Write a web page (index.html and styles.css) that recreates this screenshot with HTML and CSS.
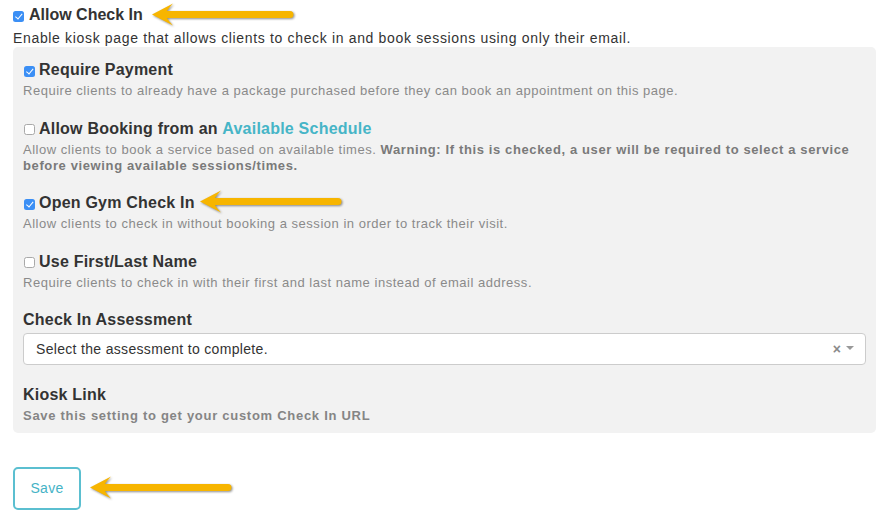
FILE: index.html
```html
<!DOCTYPE html>
<html>
<head>
<meta charset="utf-8">
<link rel="stylesheet" href="styles.css">
</head>
<body>
<div class="page">
  <div class="top-title"><span class="cb checked"></span>Allow Check In</div>
  <div class="top-desc">Enable kiosk page that allows clients to check in and book sessions using only their email.</div>

  <div class="panel">
    <div class="item">
      <div class="title"><span class="cb checked"></span>Require Payment</div>
      <div class="desc">Require clients to already have a package purchased before they can book an appointment on this page.</div>
    </div>
    <div class="item">
      <div class="title"><span class="cb"></span>Allow Booking from an <span class="link">Available Schedule</span></div>
      <div class="desc">Allow clients to book a service based on available times. <b>Warning: If this is checked, a user will be required to select a service<br>before viewing available sessions/times.</b></div>
    </div>
    <div class="item">
      <div class="title"><span class="cb checked"></span>Open Gym Check In</div>
      <div class="desc">Allow clients to check in without booking a session in order to track their visit.</div>
    </div>
    <div class="item">
      <div class="title"><span class="cb"></span>Use First/Last Name</div>
      <div class="desc">Require clients to check in with their first and last name instead of email address.</div>
    </div>
    <div class="item">
      <div class="title">Check In Assessment</div>
      <div class="select">
        <span class="select-text">Select the assessment to complete.</span>
        <span class="select-icons"><span class="clear">&#215;</span><span class="caret"></span></span>
      </div>
    </div>
    <div class="item last">
      <div class="title">Kiosk Link</div>
      <div class="desc strong">Save this setting to get your custom Check In URL</div>
    </div>
  </div>

  <button class="save">Save</button>
</div>

<svg class="arrow a1" width="150" height="30" viewBox="0 0 150 30"><path d="M0,12.5 L21,1.5 Q16,7 15,9 L138,9 A3.5,3.5 0 0 1 138,16 L15,16 Q16,18 21,23.5 Z"/></svg>
<svg class="arrow a2" width="150" height="30" viewBox="0 0 150 30"><path d="M0,12.5 L21,1.5 Q16,7 15,9 L138,9 A3.5,3.5 0 0 1 138,16 L15,16 Q16,18 21,23.5 Z"/></svg>
<svg class="arrow a3" width="150" height="30" viewBox="0 0 150 30"><path d="M0,12.5 L21,1.5 Q16,7 15,9 L138,9 A3.5,3.5 0 0 1 138,16 L15,16 Q16,18 21,23.5 Z"/></svg>
</body>
</html>
```

FILE: styles.css
```css
html, body {
  margin: 0;
  padding: 0;
  background: #ffffff;
}
body {
  font-family: "Liberation Sans", Arial, Helvetica, sans-serif;
  color: #333333;
  position: relative;
  width: 886px;
  height: 528px;
  overflow: hidden;
}
.page {
  padding: 5px 10px 0 13px;
}
.top-title {
  font-size: 16px;
  font-weight: bold;
  line-height: 20px;
  display: flex;
  align-items: center;
  color: #333;
}
.top-desc {
  font-size: 14px;
  line-height: 18px;
  margin-top: 4px;
  color: #333;
  letter-spacing: 0.66px;
}
.cb {
  display: inline-block;
  width: 11px;
  height: 11px;
  border-radius: 2.5px;
  box-sizing: border-box;
  border: 1px solid #a9a9a9;
  background: #fff;
  margin-right: 5px;
  flex: none;
  position: relative;
  top: 1px;
}
.cb.checked {
  border: none;
  background: #3b8ff5;
}
.cb.checked::after {
  content: "";
  position: absolute;
  left: 3.5px;
  top: 1.5px;
  width: 2.5px;
  height: 5.5px;
  border: solid #fff;
  border-width: 0 1.6px 1.6px 0;
  transform: rotate(40deg);
}
.panel {
  background: #f2f2f2;
  border-radius: 5px;
  padding: 13px 10px 9px 10px;
}
.item {
  margin-bottom: 19.5px;
}
.item.last {
  margin-bottom: 0;
}
.title {
  font-size: 16px;
  font-weight: bold;
  line-height: 20px;
  display: flex;
  align-items: center;
  color: #333;
  letter-spacing: 0.22px;
}
.title .cb {
  margin-left: 1px;
  margin-right: 4px;
}
.link {
  color: #46b5c7;
  margin-left: 0.28em;
}
.desc {
  font-size: 13px;
  line-height: 16px;
  color: #8a8a8a;
  margin-top: 3px;
  letter-spacing: 0.52px;
}
.desc b {
  color: #7a7a7a;
  letter-spacing: 0.62px;
}
.desc.strong {
  font-weight: bold;
  color: #858585;
  letter-spacing: 0.72px;
}
.select {
  margin-top: 3px;
  height: 32px;
  box-sizing: border-box;
  border: 1px solid #cccccc;
  border-radius: 4px;
  background: #ffffff;
  display: flex;
  align-items: center;
  justify-content: space-between;
  padding: 0 11px 0 12px;
}
.select-text {
  font-size: 14px;
  color: #333;
  letter-spacing: 0.32px;
}
.select-icons {
  display: flex;
  align-items: center;
  gap: 5px;
}
.clear {
  font-size: 14px;
  font-weight: bold;
  color: #8a8a8a;
  line-height: 14px;
}
.caret {
  width: 0;
  height: 0;
  border-left: 4px solid transparent;
  border-right: 4px solid transparent;
  border-top: 4px solid #999;
  margin-top: -2px;
}
.save {
  margin-top: 34px;
  width: 68px;
  height: 43px;
  border: 2px solid #5bbfd0;
  border-radius: 5px;
  background: #fff;
  color: #45b3c6;
  font-family: "Liberation Sans", Arial, sans-serif;
  font-size: 14px;
  letter-spacing: 0.3px;
  padding: 0;
  display: block;
}
.arrow {
  position: absolute;
  overflow: visible;
  filter: drop-shadow(1px 1.5px 1.2px rgba(0,0,0,0.45));
}
.arrow path {
  fill: #f7b500;
}
.a1 { left: 152px; top: 2px; }
.a2 { left: 200px; top: 189px; }
.a3 { left: 90px; top: 475px; }
```
